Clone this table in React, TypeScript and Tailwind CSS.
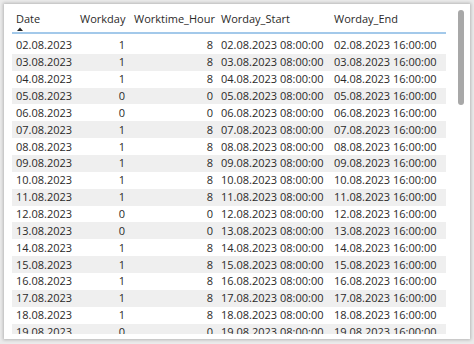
import React from "react";

type Row = { date: string; wd: number };

const days = [
  "02", "03", "04", "05", "06", "07", "08", "09", "10",
  "11", "12", "13", "14", "15", "16", "17", "18", "19",
];
const weekend = new Set(["05", "06", "12", "13", "19"]);
const rows: Row[] = days.map((d) => ({ date: `${d}.08.2023`, wd: weekend.has(d) ? 0 : 1 }));

export default function App() {
  return (
    <div
      className="w-[474px] h-[344px] bg-[#ebebeb] p-[4px] overflow-hidden"
      style={{ fontFamily: '"Open Sans", "Noto Sans", sans-serif' }}
    >
      <div className="relative w-[466px] h-[335px] bg-white shadow-[0_0_3px_1px_rgba(0,0,0,0.22)] overflow-hidden">
        <div className="pl-[8px] pt-[6px] w-[442px] text-[11px] text-[#2b2a29]">
          {/* header */}
          <div className="flex h-[22px] leading-[16px] pt-[1px]">
            <div className="w-[64px] pl-[4px] flex flex-col">
              <span>Date</span>
              <svg width="6" height="4" viewBox="0 0 6 4" className="ml-[1px]">
                <path d="M0 4 L3 0.5 L6 4 Z" fill="#252423" />
              </svg>
            </div>
            <div className="w-[53px] pl-[4px]">Workday</div>
            <div className="w-[88px] pl-[5px]">Worktime_Hour</div>
            <div className="w-[113px] pl-[4px]">Worday_Start</div>
            <div className="flex-1 pl-[4px]">Worday_End</div>
          </div>
          <div className="h-[1.5px] bg-[#a3c9ea]" />
          <div className="h-[3.5px]" />
          <div className="h-[297px] overflow-hidden">
            {rows.map((r, i) => (
              <div
                key={r.date}
                className={`flex items-center h-[16.86px] leading-[16px] ${i % 2 === 1 ? "bg-[#efefef]" : "bg-white"}`}
              >
                <div className="w-[64px] pl-[4px]">{r.date}</div>
                <div className="w-[53px] pr-[4px] text-right">{r.wd}</div>
                <div className="w-[88px] pr-[4px] text-right">{r.wd ? 8 : 0}</div>
                <div className="w-[113px] pl-[4px] whitespace-nowrap">{r.date} 08:00:00</div>
                <div className="flex-1 pl-[4px] whitespace-nowrap">{r.date} 16:00:00</div>
              </div>
            ))}
          </div>
        </div>
        <div className="absolute left-[454px] top-[6px] w-[6px] h-[95px] rounded-[3px] bg-[#a8a8a8]" />
      </div>
    </div>
  );
}
